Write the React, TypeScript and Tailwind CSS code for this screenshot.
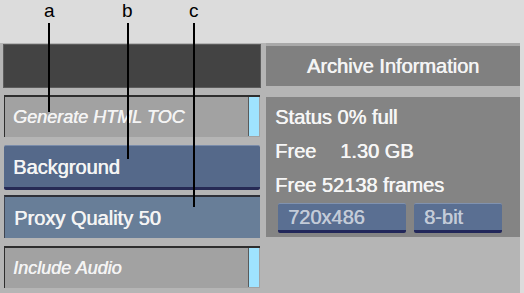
import React from "react";

const font = { fontFamily: '"Liberation Sans", Arial, sans-serif' };

function ToggleField({ label }: { label: string }) {
  return (
    <div className="flex h-[42px] w-[256px] ml-[1px] border-t-2 border-l border-[#2e2e2e] bg-[#a2a2a2]">
      <div className="flex-1 flex items-center pl-[8px] text-[18px] italic text-[#f4f4f4] [text-shadow:0.5px_0_0_#f4f4f4]">
        {label}
      </div>
      <div className="w-[11px] mr-[1px] mb-[1px] bg-[#9fe3ff] border-l border-[#5a5a5a]" />
    </div>
  );
}

export default function App() {
  return (
    <div className="relative w-[524px] h-[293px] bg-[#dcdcdc] overflow-hidden" style={font}>
      <div className="h-[43px]" />
      <div className="flex w-[520px] h-[250px] bg-[#b5b5b5]">
        {/* left column */}
        <div className="flex flex-col w-[263px] pl-[3px] pt-[1px]">
          <div className="h-[44px] w-[258px] bg-[#434343] border border-[#5c5c5c]" />
          <div className="h-[7px]" />
          <ToggleField label="Generate HTML TOC" />
          <div className="h-[8px]" />
          <div className="flex items-center h-[45px] w-[256px] ml-[1px] pl-[9px] rounded-[2px] bg-[#55698a] border-t border-[#7a8caa] border-b-[3px] border-b-[#262a55] text-[20px] text-[#f4f4f4] [text-shadow:0.6px_0_0_#f4f4f4]">
            Background
          </div>
          <div className="h-[5px]" />
          <div className="flex items-center h-[43px] w-[256px] ml-[1px] pl-[9px] bg-[#687e98] border-t-2 border-[#2e3038] border-l border-l-[#3e4450] text-[20px] text-[#f4f4f4] [text-shadow:0.6px_0_0_#f4f4f4]">
            Proxy Quality 50
          </div>
          <div className="h-[8px]" />
          <ToggleField label="Include Audio" />
        </div>
        {/* right column */}
        <div className="flex flex-col w-[257px] pl-[3px]">
          <div className="h-[3px] bg-[#a9a9a9]" />
          <div className="flex items-center justify-center h-[40px] bg-[#808080] text-[20px] text-[#f4f4f4] [text-shadow:0.6px_0_0_#f4f4f4]">
            Archive Information
          </div>
          <div className="h-[11px]" />
          <div className="flex flex-col h-[140px] bg-[#848484] pl-[9px] pt-[3px] text-[20px] text-[#f6f6f6] [text-shadow:0.6px_0_0_#f6f6f6]">
            <div className="flex items-center h-[34px]">Status 0% full</div>
            <div className="flex items-center h-[34px]">
              <span className="w-[65px]">Free</span>
              <span>1.30 GB</span>
            </div>
            <div className="flex items-center h-[34px]">Free 52138 frames</div>
            <div className="flex gap-[8px] ml-[3px] mt-[1px] [text-shadow:0.5px_0_0_#c3cbd8]">
              <div className="flex items-center h-[30px] w-[128px] pl-[10px] rounded-[2px] bg-[#5a6f92] border-t border-[#8092b0] border-b-[3px] border-b-[#22275a] text-[#c3cbd8]">
                720x486
              </div>
              <div className="flex items-center h-[30px] w-[88px] pl-[10px] rounded-[2px] bg-[#5a6f92] border-t border-[#8092b0] border-b-[3px] border-b-[#22275a] text-[#c3cbd8]">
                8-bit
              </div>
            </div>
          </div>
        </div>
      </div>

      {/* annotation callouts */}
      <div className="absolute left-[44px] top-[0px] text-[19px] text-black leading-[22px]">a</div>
      <div className="absolute left-[48px] top-[23px] w-[2px] h-[89px] bg-black" />
      <div className="absolute left-[122px] top-[0px] text-[19px] text-black leading-[22px]">b</div>
      <div className="absolute left-[127px] top-[23px] w-[2px] h-[136px] bg-black" />
      <div className="absolute left-[189px] top-[0px] text-[19px] text-black leading-[22px]">c</div>
      <div className="absolute left-[193px] top-[23px] w-[2px] h-[184px] bg-black" />
    </div>
  );
}
